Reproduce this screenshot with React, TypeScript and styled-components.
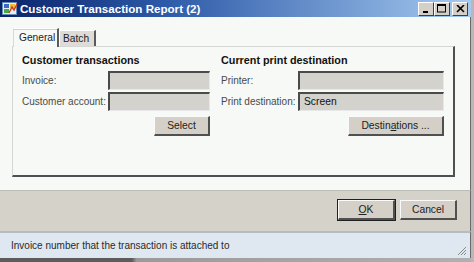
import React from "react";
import styled, { createGlobalStyle } from "styled-components";

const Global = createGlobalStyle`
  html, body { margin: 0; padding: 0; background: #c8c8c8; }
  body { font-family: "Liberation Sans", Arial, sans-serif; font-size: 10px; }
`;

const Win = styled.div`
  width: 474px;
  height: 262px;
  display: flex;
  flex-direction: column;
  background: #f6f9f5;
  border-right: 3px solid #b8b8b8;
  box-sizing: border-box;
  position: relative;
  overflow: hidden;
`;

const TitleBar = styled.div`
  height: 17px;
  display: flex;
  align-items: center;
  padding: 0 3px 0 2px;
  background: linear-gradient(to right, #0a246a 0%, #2d5aa8 35%, #a6caf0 100%);
  flex-shrink: 0;
`;

const Title = styled.div`
  flex: 1;
  color: #fff;
  font-weight: bold;
  font-size: 11.6px;
  margin-left: 2px;
  white-space: nowrap;
`;

const CtrlGroup = styled.div`
  display: flex;
`;

const CtrlBtn = styled.div<{ $gap?: boolean }>`
  width: 16px;
  height: 14px;
  box-sizing: border-box;
  background: #d4d0c8;
  border-top: 1px solid #fff;
  border-left: 1px solid #fff;
  border-right: 1px solid #404040;
  border-bottom: 1px solid #404040;
  margin-left: ${(p) => (p.$gap ? "2px" : "0")};
  display: flex;
  align-items: center;
  justify-content: center;
`;

const Body = styled.div`
  flex: 1;
  padding: 11px 0 0 12px;
  display: flex;
  flex-direction: column;
  border-right: 1px solid #6a6a6a;
`;

const Tabs = styled.div`
  display: flex;
  align-items: flex-end;
  height: 18px;
  margin-left: 1px;
`;

const Tab = styled.div<{ $active?: boolean }>`
  box-sizing: border-box;
  height: ${(p) => (p.$active ? "19px" : "16px")};
  width: ${(p) => (p.$active ? "46px" : "37px")};
  padding: ${(p) => (p.$active ? "3px 0 0 5px" : "2px 0 0 3px")};
  font-size: 10.2px;
  background: ${(p) => (p.$active ? "#f6f9f5" : "#dedcd6")};
  border-top: 1px solid #ffffff;
  border-left: 1px solid ${(p) => (p.$active ? "#d8d8d8" : "#ffffff")};
  border-right: 2px solid #5a5a5a;
  color: #222;
  white-space: nowrap;
  position: relative;
  z-index: ${(p) => (p.$active ? 2 : 1)};
  margin-bottom: ${(p) => (p.$active ? "-1px" : "0")};
  box-shadow: ${(p) => (p.$active ? "inset 0 1px 0 #d0d0d0" : "none")};
`;

const Panel = styled.div`
  width: 443px;
  height: 131px;
  box-sizing: border-box;
  border-top: 1px solid #d6d6d6;
  border-left: 1px solid #d6d6d6;
  border-right: 2px solid #505050;
  border-bottom: 2px solid #505050;
  padding: 7px 0 0 9px;
  display: flex;
  gap: 11px;
`;

const Column = styled.div<{ $w: number }>`
  width: ${(p) => p.$w}px;
  display: flex;
  flex-direction: column;
`;

const Heading = styled.div`
  font-weight: bold;
  font-size: 10.8px;
  color: #111;
  height: 17px;
  line-height: 13px;
`;

const Row = styled.div`
  display: flex;
  align-items: center;
  height: 19px;
  margin-bottom: 2px;
`;

const Label = styled.div<{ $w: number }>`
  width: ${(p) => p.$w}px;
  font-size: 10px;
  color: #4a4a4a;
  flex-shrink: 0;
  white-space: nowrap;
`;

const Field = styled.div`
  flex: 1;
  height: 19px;
  box-sizing: border-box;
  background: #d4d2cc;
  border-top: 2px solid #4a4a4a;
  border-left: 2px solid #4a4a4a;
  border-right: 1px solid #e8e8e8;
  border-bottom: 1px solid #e8e8e8;
  padding: 1px 0 0 4px;
  color: #111;
  font-size: 10.3px;
  line-height: 14px;
`;

const BtnRow = styled.div`
  display: flex;
  justify-content: flex-end;
  margin-top: 3px;
`;

const Button = styled.div<{ $w: number; $default?: boolean }>`
  width: ${(p) => p.$w}px;
  height: 20px;
  box-sizing: border-box;
  background: #d4d0c8;
  border-top: 1px solid #fafafa;
  border-left: 1px solid #fafafa;
  border-right: 2px solid #505050;
  border-bottom: 2px solid #505050;
  outline: ${(p) => (p.$default ? "1px solid #202020" : "none")};
  display: flex;
  align-items: center;
  justify-content: center;
  font-size: 10.3px;
  color: #222;
`;

const ButtonBar = styled.div`
  height: 41px;
  background: #d5d2ca;
  border-top: 1px solid #bdbdb8;
  box-sizing: border-box;
  display: flex;
  justify-content: flex-end;
  align-items: flex-start;
  padding: 9px 13px 0 0;
  gap: 5px;
  border-right: 1px solid #6a6a6a;
`;

const StatusBar = styled.div`
  height: 27px;
  background: #dfe7f1;
  border-top: 2px solid #b6bcc4;
  box-sizing: border-box;
  display: flex;
  align-items: center;
  padding: 0 0 0 11px;
  font-size: 10px;
  color: #2a2a2a;
  position: relative;
  border-right: 1px solid #6a6a6a;
`;

const Grip = styled.svg`
  position: absolute;
  right: 3px;
  bottom: 2px;
`;

const BottomEdge = styled.div`
  height: 4px;
  background: linear-gradient(to right, #5c5c5c 0%, #5c5c5c 28%, #9a9a9a 29%, #b0b0b0 100%);
`;

const Ul = styled.span`
  text-decoration: underline;
`;

export default function App() {
  return (
    <>
      <Global />
      <Win>
        <TitleBar>
          <svg width="16" height="15" viewBox="0 0 16 15">
            <rect x="0.5" y="1.5" width="14" height="12" fill="#e8eef8" stroke="#6a8ab8" />
            <rect x="2" y="3" width="5" height="4" fill="#3a6cc8" />
            <rect x="8" y="3" width="5" height="4" fill="#f0c030" />
            <rect x="2" y="8" width="5" height="4" fill="#48a848" />
            <path d="M7 12 L10 6 L12 9 L15 3" stroke="#d04020" strokeWidth="1.4" fill="none" />
          </svg>
          <Title>Customer Transaction Report (2)</Title>
          <CtrlGroup>
            <CtrlBtn>
              <svg width="8" height="8" viewBox="0 0 8 8">
                <rect x="1" y="6" width="5" height="2" fill="#000" />
              </svg>
            </CtrlBtn>
            <CtrlBtn>
              <svg width="10" height="9" viewBox="0 0 10 9">
                <rect x="0.5" y="0.5" width="8" height="7.5" fill="none" stroke="#000" />
                <rect x="0" y="0" width="9" height="2" fill="#000" />
              </svg>
            </CtrlBtn>
            <CtrlBtn $gap>
              <svg width="9" height="8" viewBox="0 0 9 8">
                <path d="M1 0 L8 7 M8 0 L1 7" stroke="#000" strokeWidth="1.6" />
              </svg>
            </CtrlBtn>
          </CtrlGroup>
        </TitleBar>
        <Body>
          <Tabs>
            <Tab $active>General</Tab>
            <Tab>Batch</Tab>
          </Tabs>
          <Panel>
            <Column $w={188}>
              <Heading>Customer transactions</Heading>
              <Row>
                <Label $w={86}>Invoice:</Label>
                <Field />
              </Row>
              <Row>
                <Label $w={86}>Customer account:</Label>
                <Field />
              </Row>
              <BtnRow>
                <Button $w={56}>Select</Button>
              </BtnRow>
            </Column>
            <Column $w={223}>
              <Heading>Current print destination</Heading>
              <Row>
                <Label $w={77}>Printer:</Label>
                <Field />
              </Row>
              <Row>
                <Label $w={77}>Print destination:</Label>
                <Field>Screen</Field>
              </Row>
              <BtnRow>
                <Button $w={96}>
                  <span>
                    Destin<Ul>a</Ul>tions ...
                  </span>
                </Button>
              </BtnRow>
            </Column>
          </Panel>
        </Body>
        <ButtonBar>
          <Button $w={57} $default>
            <span>
              <Ul>O</Ul>K
            </span>
          </Button>
          <Button $w={57}>Cancel</Button>
        </ButtonBar>
        <StatusBar>
          Invoice number that the transaction is attached to
          <Grip width="10" height="10" viewBox="0 0 10 10">
            <path d="M9 1 L1 9 M9 4 L4 9 M9 7 L7 9" stroke="#888" strokeWidth="1" />
          </Grip>
        </StatusBar>
        <BottomEdge />
      </Win>
    </>
  );
}
